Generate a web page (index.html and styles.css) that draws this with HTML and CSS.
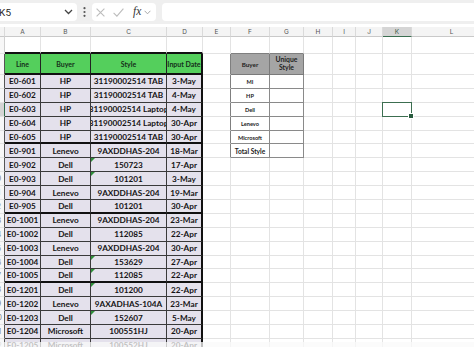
FILE: index.html
```html
<!DOCTYPE html>
<html>
<head>
<meta charset="utf-8">
<link rel="stylesheet" href="styles.css">
</head>
<body>
<div class="toolbar">
  <div class="namebox"><span>K5</span><svg width="9" height="6" viewBox="0 0 9 6"><path d="M1 1 L4.5 4.5 L8 1" fill="none" stroke="#444" stroke-width="1.3"/></svg></div>
  <div class="dots"><svg width="3" height="10" viewBox="0 0 3 10"><circle cx="1.5" cy="1.2" r="1.1" fill="#555"/><circle cx="1.5" cy="5" r="1.1" fill="#555"/><circle cx="1.5" cy="8.8" r="1.1" fill="#555"/></svg></div>
  <div class="fxbox">
    <svg class="xic" width="9" height="9" viewBox="0 0 9 9"><path d="M0.6 0.6 L8.4 8.4 M8.4 0.6 L0.6 8.4" fill="none" stroke="#bcbcbc" stroke-width="1.1"/></svg>
    <svg class="ok" width="11" height="9" viewBox="0 0 11 9"><path d="M0.6 4.8 L3.9 8.1 L10.4 0.7" fill="none" stroke="#bcbcbc" stroke-width="1.1"/></svg>
    <span class="fx">fx</span>
    <svg class="chv" width="7" height="5" viewBox="0 0 7 5"><path d="M0.6 0.8 L3.5 3.8 L6.4 0.8" fill="none" stroke="#a8a8a8" stroke-width="1"/></svg>
  </div>
  <div class="formula"></div>
</div>

<div class="sheet">
  <div class="row hdr"><i class="corner"></i><i>A</i><i>B</i><i>C</i><i>D</i><i>E</i><i>F</i><i>G</i><i>H</i><i>I</i><i>J</i><i class="ksel">K</i><i>L</i></div>

  <div class="row r1"><i class="rh">1</i><i class="tt"></i><i class="tt"></i><i class="tt"></i><i class="tt"></i><i></i><i class="st"></i><i class="st"></i><i></i><i></i><i></i><i></i><i></i></div>

  <div class="row r2"><i class="rh tb">2</i><i class="h a">Line</i><i class="h">Buyer</i><i class="h">Style</i><i class="h d">Input Date</i><i class="se"></i><i class="sh">Buyer</i><i class="sh wrap">Unique Style</i><i></i><i></i><i></i><i></i><i></i></div>

  <div class="row"><i class="rh tb">3</i><i class="t a">E0-601</i><i class="t">HP</i><i class="t">31190002514 TAB</i><i class="t d">3-May</i><i class="se"></i><i class="s">MI</i><i class="s"></i><i></i><i></i><i></i><i></i><i></i></div>
  <div class="row"><i class="rh tb">4</i><i class="t a">E0-602</i><i class="t">HP</i><i class="t">31190002514 TAB</i><i class="t d">4-May</i><i class="se"></i><i class="s">HP</i><i class="s"></i><i></i><i></i><i></i><i></i><i></i></div>
  <div class="row"><i class="rh rsel">5</i><i class="t a">E0-603</i><i class="t">HP</i><i class="t">31190002514 Laptop</i><i class="t d">4-May</i><i class="se"></i><i class="s">Dell</i><i class="s"></i><i></i><i></i><i></i><i class="cur"></i><i></i></div>
  <div class="row"><i class="rh tb">6</i><i class="t a">E0-604</i><i class="t">HP</i><i class="t">31190002514 Laptop</i><i class="t d">30-Apr</i><i class="se"></i><i class="s">Lenevo</i><i class="s"></i><i></i><i></i><i></i><i></i><i></i></div>
  <div class="row ge"><i class="rh tb">7</i><i class="t a">E0-605</i><i class="t">HP</i><i class="t">31190002514 TAB</i><i class="t d">30-Apr</i><i class="se"></i><i class="s">Microsoft</i><i class="s"></i><i></i><i></i><i></i><i></i><i></i></div>
  <div class="row"><i class="rh tb">8</i><i class="t a">E0-901</i><i class="t">Lenevo</i><i class="t">9AXDDHAS-204</i><i class="t d">18-Mar</i><i class="se"></i><i class="s tot">Total Style</i><i class="s"></i><i></i><i></i><i></i><i></i><i></i></div>
  <div class="row"><i class="rh tb">9</i><i class="t a">E0-902</i><i class="t">Dell</i><i class="t m">150723</i><i class="t d">17-Apr</i><i></i><i></i><i></i><i></i><i></i><i></i><i></i><i></i></div>
  <div class="row"><i class="rh tb">10</i><i class="t a">E0-903</i><i class="t">Dell</i><i class="t m">101201</i><i class="t d">3-May</i><i></i><i></i><i></i><i></i><i></i><i></i><i></i><i></i></div>
  <div class="row"><i class="rh tb">11</i><i class="t a">E0-904</i><i class="t">Lenevo</i><i class="t">9AXDDHAS-204</i><i class="t d">19-Mar</i><i></i><i></i><i></i><i></i><i></i><i></i><i></i><i></i></div>
  <div class="row ge"><i class="rh tb">12</i><i class="t a">E0-905</i><i class="t">Dell</i><i class="t">101201</i><i class="t d">30-Apr</i><i></i><i></i><i></i><i></i><i></i><i></i><i></i><i></i></div>
  <div class="row"><i class="rh tb">13</i><i class="t a">E0-1001</i><i class="t">Lenevo</i><i class="t">9AXDDHAS-204</i><i class="t d">23-Mar</i><i></i><i></i><i></i><i></i><i></i><i></i><i></i><i></i></div>
  <div class="row"><i class="rh tb">14</i><i class="t a">E0-1002</i><i class="t">Dell</i><i class="t">112085</i><i class="t d">22-Apr</i><i></i><i></i><i></i><i></i><i></i><i></i><i></i><i></i></div>
  <div class="row"><i class="rh tb">15</i><i class="t a">E0-1003</i><i class="t">Lenevo</i><i class="t">9AXDDHAS-204</i><i class="t d">30-Apr</i><i></i><i></i><i></i><i></i><i></i><i></i><i></i><i></i></div>
  <div class="row"><i class="rh tb">16</i><i class="t a">E0-1004</i><i class="t">Dell</i><i class="t m">153629</i><i class="t d">27-Apr</i><i></i><i></i><i></i><i></i><i></i><i></i><i></i><i></i></div>
  <div class="row ge"><i class="rh tb">17</i><i class="t a">E0-1005</i><i class="t">Dell</i><i class="t m">112085</i><i class="t d">22-Apr</i><i></i><i></i><i></i><i></i><i></i><i></i><i></i><i></i></div>
  <div class="row"><i class="rh tb">18</i><i class="t a">E0-1201</i><i class="t">Dell</i><i class="t m">101200</i><i class="t d">22-Apr</i><i></i><i></i><i></i><i></i><i></i><i></i><i></i><i></i></div>
  <div class="row"><i class="rh tb">19</i><i class="t a">E0-1202</i><i class="t">Lenevo</i><i class="t">9AXADHAS-104A</i><i class="t d">23-Mar</i><i></i><i></i><i></i><i></i><i></i><i></i><i></i><i></i></div>
  <div class="row"><i class="rh tb">20</i><i class="t a">E0-1203</i><i class="t">Dell</i><i class="t m">152607</i><i class="t d">5-May</i><i></i><i></i><i></i><i></i><i></i><i></i><i></i><i></i></div>
  <div class="row"><i class="rh tb">21</i><i class="t a">E0-1204</i><i class="t">Microsoft</i><i class="t">100551HJ</i><i class="t d">20-Apr</i><i></i><i></i><i></i><i></i><i></i><i></i><i></i><i></i></div>
  <div class="row last"><i class="rh tb">22</i><i class="t a">E0-1205</i><i class="t">Microsoft</i><i class="t">100552HJ</i><i class="t d">20-Apr</i><i></i><i></i><i></i><i></i><i></i><i></i><i></i><i></i></div>
</div>
<div class="hscroll"></div>
</body>
</html>
```

FILE: styles.css
```css
* { box-sizing: border-box; margin: 0; padding: 0; }
html, body { width: 474px; height: 347px; overflow: hidden; background: #fff; }
body { font-family: "Lato", "Liberation Sans", sans-serif; color: #111; position: relative; }

.toolbar { height: 24px; background: #efefef; display: flex; align-items: flex-start; padding-top: 3px; }
.namebox { width: 81px; margin-left: -4px; height: 18px; background: #fff; border-radius: 4px; display: flex; align-items: center; padding-left: 3px; font-family: "Inter", "Liberation Sans", sans-serif; font-size: 9.5px; color: #222; }
.namebox span { flex: 1; }
.namebox svg { margin-right: 4px; }
.dots { width: 15px; height: 18px; display: flex; justify-content: center; align-items: center; }
.fxbox { width: 64px; height: 18px; background: #fff; border-radius: 4px; display: flex; align-items: center; padding-left: 4px; }
.fxbox .ok { margin-left: 8px; }
.fxbox .fx { margin-left: 9px; font-family: "Liberation Serif", serif; font-style: italic; font-size: 11.5px; color: #333; line-height: 1; }
.fxbox .chv { margin-left: 3px; }
.formula { flex: 1; height: 18px; margin-left: 6px; background: #fff; border-radius: 4px 0 0 4px; }

.sheet { margin-left: -11px; margin-top: 3px; }
.row { display: grid; grid-template-columns: 16px 36px 50px 76px 36px 28px 39px 34px 29px 23px 27px 29px 80px; height: 13.9px; }
.row > * { display: flex; align-items: center; justify-content: center; overflow: hidden; white-space: nowrap; font-style: normal; border-right: 1px solid #e3e3e3; border-bottom: 1px solid #e3e3e3; }

.hdr { height: 10px; background: #f4f4f4; }
.hdr > * { font-family: "Inter", "Liberation Sans", sans-serif; font-size: 6.5px; color: #555; border-right: 1px solid #dadada; border-bottom: 1px solid #c9c9c9; }
.hdr .ksel { background: #d5d5d5; border-bottom: 1px solid #3a6e50; color: #3b5a47; }
.r1 { height: 17px; }
.r2 { height: 21px; }

.rh { font-family: "Inter", "Liberation Sans", sans-serif; font-size: 7px; color: #777; padding-left: 2px; background: #f7f7f7; border-right: 1px solid #d0d0d0; }
.rh.tb { border-right-color: #555; }
.rh.rsel { background: #d5d5d5; border-right: 1px solid #2f6b4a; }

.tt { border-bottom: 2px solid #111; }
.st { border-bottom: 1px solid #7f7f7f; }
.se { border-right: 1px solid #7f7f7f; }

.t { background: #e4e1ec; font-weight: 700; font-size: 8.2px; color: #141414; border-right: 1px solid #3a3a3a; border-bottom: 1px solid #3a3a3a; }
.t.m { position: relative; }
.t.m::before { content: ""; position: absolute; left: 0; top: 0; border-top: 4px solid #2f8f3a; border-right: 4px solid transparent; }
.d { border-right: 2px solid #111; }
.ge .t { border-bottom: 2px solid #111; }

.h { background: #54cf5c; font-weight: 700; font-size: 7px; color: #14301a; border-right: 1px solid #222; border-bottom: 2px solid #111; }
.h.d { border-right: 2px solid #111; }

.sh { background: #a5a5a5; font-weight: 700; font-size: 6.3px; color: #1e1e1e; border-right: 1px solid #7a7a7a; border-bottom: 1px solid #7a7a7a; }
.sh.wrap { white-space: normal; text-align: center; line-height: 1.15; font-size: 6.8px; padding: 0 4px; }
.s { font-weight: 700; font-size: 5.6px; color: #1a1a1a; border-right: 1px solid #8a8a8a; border-bottom: 1px solid #8a8a8a; }
.s.tot { font-size: 6.6px; }

.cur { position: relative; overflow: visible !important; }
.cur::after { content: ""; position: absolute; left: -1px; top: -1px; right: -1px; bottom: -1px; border: 1.5px solid #3c6e50; }
.cur::before { content: ""; position: absolute; right: -3px; bottom: -3px; width: 4px; height: 4px; background: #2a5c3f; border: 1px solid #fff; z-index: 2; }

.hscroll { position: absolute; left: 0; right: 0; bottom: 0; height: 5px; background: rgba(250, 250, 250, 0.75); }
```
